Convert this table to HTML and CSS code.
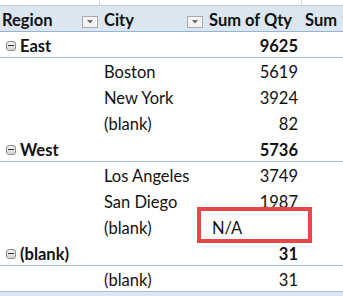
FILE: index.html
```html
<!DOCTYPE html>
<html>
<head>
<meta charset="utf-8">
<link rel="stylesheet" href="styles.css">
</head>
<body>
<div class="pivot">
  <div class="row strip"><div class="c"></div><div class="c"></div><div class="c"></div><div class="c last"></div></div>
  <div class="row head">
    <div class="c lbl">Region<span class="dd"><svg width="6" height="4" viewBox="0 0 6 4"><path d="M0 0H6L3 3.5Z" fill="#6a6a6a"/></svg></span></div>
    <div class="c lbl">City<span class="dd"><svg width="6" height="4" viewBox="0 0 6 4"><path d="M0 0H6L3 3.5Z" fill="#6a6a6a"/></svg></span></div>
    <div class="c lbl">Sum of Qty</div>
    <div class="c lbl">Sum</div>
  </div>
  <div class="row group"><div class="c b"><span class="mn"></span>East</div><div class="c"></div><div class="c num b">9625</div><div class="c"></div></div>
  <div class="row"><div class="c"></div><div class="c">Boston</div><div class="c num">5619</div><div class="c"></div></div>
  <div class="row"><div class="c"></div><div class="c">New York</div><div class="c num">3924</div><div class="c"></div></div>
  <div class="row"><div class="c"></div><div class="c">(blank)</div><div class="c num">82</div><div class="c"></div></div>
  <div class="row group"><div class="c b"><span class="mn"></span>West</div><div class="c"></div><div class="c num b">5736</div><div class="c"></div></div>
  <div class="row"><div class="c"></div><div class="c">Los Angeles</div><div class="c num">3749</div><div class="c"></div></div>
  <div class="row"><div class="c"></div><div class="c">San Diego</div><div class="c num">1987</div><div class="c"></div></div>
  <div class="row"><div class="c"></div><div class="c">(blank)</div><div class="c na">N/A<span class="hl"></span></div><div class="c"></div></div>
  <div class="row group"><div class="c b"><span class="mn"></span>(blank)</div><div class="c"></div><div class="c num b">31</div><div class="c"></div></div>
  <div class="row endline"><div class="c"></div><div class="c">(blank)</div><div class="c num">31</div><div class="c"></div></div>
  <div class="row total"></div>
</div>
</body>
</html>
```

FILE: styles.css
```css
html, body {
  margin: 0;
  padding: 0;
  background: #ffffff;
}
body {
  width: 343px;
  height: 296px;
  overflow: hidden;
  font-family: Lato, "Liberation Sans", sans-serif;
  font-size: 16.5px;
  color: #111;
}
.pivot {
  display: flex;
  flex-direction: column;
  width: 343px;
}
.row {
  display: grid;
  grid-template-columns: 100px 105px 97px 41px;
  height: 26px;
  align-items: center;
  flex: none;
}
.c {
  position: relative;
  height: 100%;
  display: flex;
  align-items: center;
  white-space: nowrap;
  padding-top: 2px;
  box-sizing: border-box;
}
.row > .c:nth-child(2) { padding-left: 4px; }
.row > .c:nth-child(4) { padding-left: 3px; }
.strip {
  height: 6px;
  border-bottom: 1px solid #c9cfd6;
  box-sizing: border-box;
}
.strip .c { border-right: 1px solid #d6d6d6; padding: 0; }
.strip .c:nth-child(2) { border-right: none; }
.strip .c.last { border-right: none; }
.head {
  height: 26px;
  background: #dce6f1;
  border-bottom: 1px solid #95b3d7;
  box-sizing: border-box;
}
.lbl {
  font-weight: 700;
  padding-left: 3px;
}
.head .c:nth-child(1) { padding-left: 2px; }
.head .c:nth-child(3) { padding-left: 4px; }
.dd {
  position: absolute;
  right: 2px;
  top: 10px;
  width: 14px;
  height: 10px;
  border: 1px solid #a9a9a9;
  background: #f4f4f4;
  display: flex;
  align-items: center;
  justify-content: center;
}
.group {
  border-bottom: 1px solid #a6bfdb;
  box-sizing: border-box;
}
.b { font-weight: 700; }
.group .c:first-child { padding-left: 6px; }
.mn {
  width: 10px;
  height: 10px;
  border: 1px solid #8a8a8a;
  border-radius: 3px;
  background: linear-gradient(#f4f4f4, #d6d6d6);
  margin-right: 4px;
  position: relative;
  box-sizing: border-box;
  flex: none;
}
.mn::after {
  content: "";
  position: absolute;
  left: 1px;
  right: 1px;
  top: 3px;
  height: 1.5px;
  background: #333;
}
.num {
  justify-content: flex-end;
  padding-right: 4px;
}
.na {
  padding-left: 7px;
}
.hl {
  position: absolute;
  left: -8px;
  right: -10px;
  top: -7px;
  bottom: -3px;
  border: 4px solid #e8474a;
}
.endline {
  border-bottom: 1px solid #a6bfdb;
  box-sizing: border-box;
}
.total {
  height: 4px;
  background: #dce6f1;
}
```
